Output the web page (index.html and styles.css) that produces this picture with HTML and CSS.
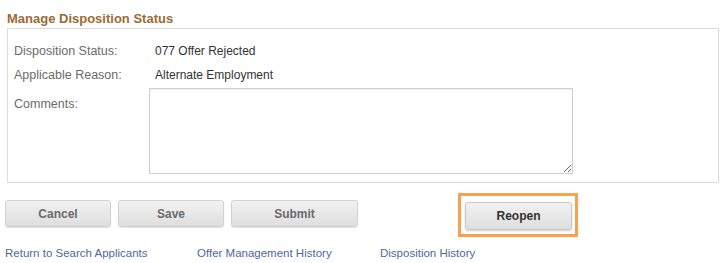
FILE: index.html
```html
<!DOCTYPE html>
<html>
<head>
<meta charset="utf-8">
<link rel="stylesheet" href="styles.css">
</head>
<body>
<div class="page">
  <div class="title">Manage Disposition Status</div>
  <div class="panel">
    <div class="label">Disposition Status:</div>
    <div class="value">077 Offer Rejected</div>
    <div class="label">Applicable Reason:</div>
    <div class="value">Alternate Employment</div>
    <div class="label label-top">Comments:</div>
    <div class="field"><textarea class="comments"></textarea></div>
  </div>
  <div class="actions">
    <button class="btn btn-sm">Cancel</button>
    <button class="btn btn-sm">Save</button>
    <button class="btn btn-wide">Submit</button>
    <div class="highlight"><button class="btn btn-reopen">Reopen</button></div>
  </div>
  <div class="links">
    <a class="link link-1" href="#">Return to Search Applicants</a>
    <a class="link link-2" href="#">Offer Management History</a>
    <a class="link" href="#">Disposition History</a>
  </div>
</div>
</body>
</html>
```
FILE: styles.css
```css
* { box-sizing: border-box; }
html, body { margin: 0; padding: 0; background: #fff; }
body { font-family: "Liberation Sans", Arial, sans-serif; font-size: 12px; color: #333; }
.page { padding: 11px 0 0 0; width: 725px; }
.title {
  margin-left: 7px;
  font-size: 13px;
  font-weight: bold;
  color: #9c6a33;
  line-height: 16px;
  height: 17px;
}
.panel {
  margin-left: 7px;
  width: 712px;
  border: 1px solid #dcdcdc;
  padding: 10px 0 8px 6px;
  display: grid;
  grid-template-columns: 135px 424px;
  grid-template-rows: 24px 24px 87px;
}
.label { color: #6b6b6b; line-height: 24px; font-size: 12.5px; }
.value { color: #333; line-height: 24px; padding-left: 6px; }
.label-top { line-height: 14px; padding-top: 10px; }
.field { padding-top: 1px; }
.comments {
  display: block;
  width: 424px;
  height: 86px;
  margin: 0;
  border: 1px solid #cfcfcf;
  box-shadow: inset 0 1px 2px rgba(0,0,0,0.08);
  background: #fff;
  font-family: "Liberation Sans", Arial, sans-serif;
  font-size: 12px;
  resize: both;
}
.actions {
  display: flex;
  align-items: flex-start;
  margin-top: 10px;
  padding-left: 5px;
}
.btn {
  font-family: "Liberation Sans", Arial, sans-serif;
  font-size: 12px;
  font-weight: bold;
  color: #6b6b6b;
  height: 27px;
  border: 1px solid #d2d2d2;
  border-radius: 3px;
  background: linear-gradient(#f2f2f2, #dedede);
  box-shadow: 0 1px 1px rgba(0,0,0,0.12);
  padding: 0;
  margin-top: 7px;
}
.btn-sm { width: 106px; margin-right: 7px; }
.btn-wide { width: 127px; }
.highlight {
  margin-left: 100px;
  width: 120px;
  height: 44px;
  border: 3px solid #fba04c;
  padding: 6px 0 0 4px;
}
.btn-reopen {
  width: 107px;
  height: 28px;
  margin: 0;
  color: #333;
  border-color: #c8c8c8;
  box-shadow: 0 1px 2px rgba(0,0,0,0.2);
}
.links {
  display: flex;
  margin-top: 9px;
  padding-left: 5px;
  line-height: 14px;
}
.link { color: #51679b; text-decoration: none; font-size: 11.5px; }
.link-1 { width: 192px; }
.link-2 { width: 183px; }
```
